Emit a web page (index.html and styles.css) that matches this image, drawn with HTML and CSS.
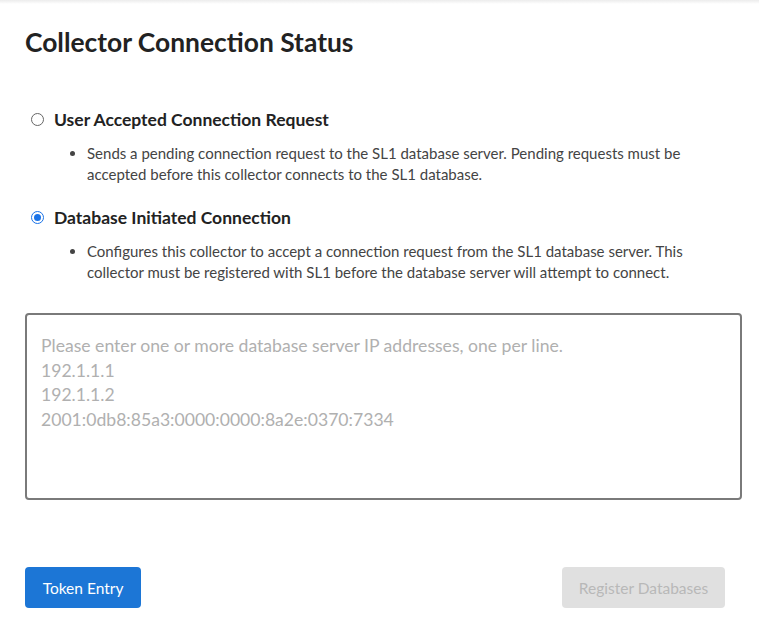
FILE: index.html
```html
<!DOCTYPE html>
<html>
<head>
<meta charset="utf-8">
<link rel="stylesheet" href="styles.css">
</head>
<body>
<div class="page">
  <h1 class="title">Collector Connection Status</h1>
  <div class="options">
    <div class="option">
      <label class="radio-row">
        <span class="radio"></span>
        <span class="radio-label">User Accepted Connection Request</span>
      </label>
      <ul class="desc">
        <li>Sends a pending connection request to the SL1 database server. Pending requests must be accepted before this collector connects to the SL1 database.</li>
      </ul>
    </div>
    <div class="option">
      <label class="radio-row">
        <span class="radio checked"></span>
        <span class="radio-label">Database Initiated Connection</span>
      </label>
      <ul class="desc">
        <li>Configures this collector to accept a connection request from the SL1 database server. This collector must be registered with SL1 before the database server will attempt to connect.</li>
      </ul>
    </div>
  </div>
  <textarea class="ips" placeholder="Please enter one or more database server IP addresses, one per line.
192.1.1.1
192.1.1.2
2001:0db8:85a3:0000:0000:8a2e:0370:7334"></textarea>
  <div class="actions">
    <button class="btn primary">Token Entry</button>
    <button class="btn disabled" disabled>Register Databases</button>
  </div>
</div>
</body>
</html>
```

FILE: styles.css
```css
html, body {
  margin: 0;
  padding: 0;
  background: #fff;
}
body {
  font-family: Lato, "Open Sans", sans-serif;
  color: #222;
}
.page {
  padding: 27px 17px 0 25px;
  height: 633px;
  box-sizing: border-box;
  background: linear-gradient(#ececec, #fff 4px);
}
.title {
  margin: 0;
  font-size: 26.4px;
  font-weight: 700;
  line-height: 30px;
  color: #222;
}
.options {
  margin-top: 51px;
  display: flex;
  flex-direction: column;
  gap: 21px;
}
.radio-row {
  display: flex;
  align-items: center;
  gap: 10px;
  padding-left: 6px;
  height: 22px;
}
.radio {
  width: 11px;
  height: 11px;
  border: 1px solid #666;
  border-radius: 50%;
  box-sizing: content-box;
  position: relative;
}
.radio.checked {
  border-color: #1a73e8;
}
.radio.checked::after {
  content: "";
  position: absolute;
  left: 2px;
  top: 2px;
  width: 7px;
  height: 7px;
  border-radius: 50%;
  background: #1a73e8;
}
.radio-label {
  font-size: 17.5px;
  font-weight: 700;
  color: #222;
}
.desc {
  margin: 13px 0 0 0;
  padding-left: 62px;
  font-size: 15px;
  line-height: 21px;
  color: #444;
}
.ips {
  display: block;
  margin-top: 30px;
  width: 717px;
  height: 187px;
  box-sizing: border-box;
  border: 2px solid #7a7a7a;
  border-radius: 4px;
  padding: 19px 14px;
  font-family: Lato, sans-serif;
  font-size: 17.6px;
  line-height: 24.7px;
  resize: none;
  outline: none;
}
.ips::placeholder {
  color: #b0b0b0;
}
.actions {
  margin-top: 67px;
  display: flex;
  justify-content: space-between;
  padding-right: 17px;
}
.btn {
  height: 41px;
  border: none;
  border-radius: 4px;
  font-family: Lato, sans-serif;
  font-size: 15.5px;
  padding: 0 10px;
}
.btn.primary {
  background: #1c76d6;
  color: #fff;
  width: 116px;
}
.btn.disabled {
  background: #e0e0e0;
  color: #b8b8b8;
  width: 163px;
}
```
